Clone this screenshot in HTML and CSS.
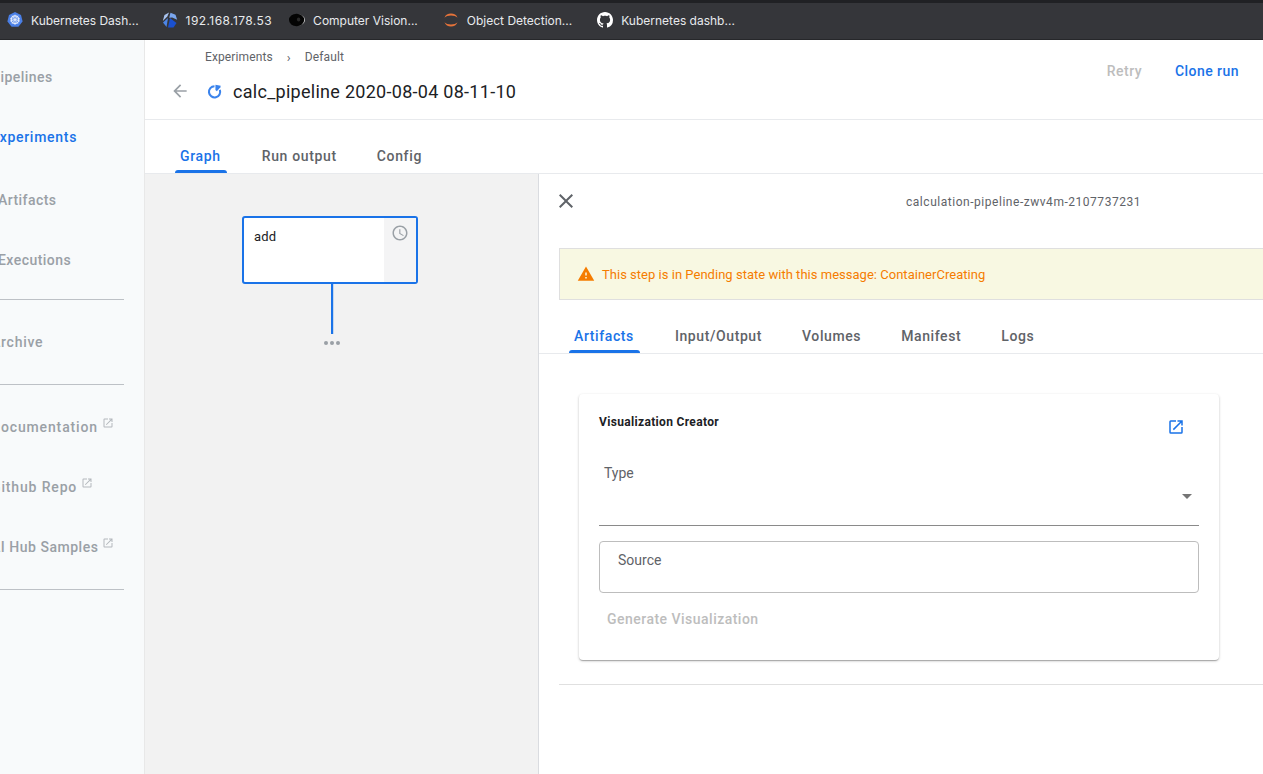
FILE: index.html
```html
<!DOCTYPE html>
<html lang="en">
<head>
<meta charset="utf-8">
<title>Kubeflow run</title>
<link rel="stylesheet" href="styles.css">
</head>
<body>
<div class="browser-top"></div>
<div class="bookmarks">
  <div class="bm bm-1">
    <svg class="fav" viewBox="0 0 16 16"><path d="M8 0l6 2.900 1.600 6.500-4.200 5.300H4.600L.4 9.400 2 2.900z" fill="#4a7fe6"/><circle cx="8" cy="7.700" r="3.800" fill="none" stroke="#e3ebfb" stroke-width="1.300"/><path d="M8 2.600v10.200M3.200 6.300l9.600 2.800M12.800 6.300L3.200 9.100M5 11.800l6-8.200M11 11.800L5 3.600" stroke="#e3ebfb" stroke-width=".8"/></svg>
    <span>Kubernetes Dash...</span>
  </div>
  <div class="bm bm-2">
    <svg class="fav" viewBox="0 0 16 16"><path d="M7 .5L2.500 3 .8 9l4.500-4.500z" fill="#a9c4f0"/><path d="M8.500 .8l5 2 1.700 5-5-2.300-3 .2z" fill="#7aa6ee"/><path d="M8 6l6.500 5-3 4.500H6z" fill="#1a50cf"/><path d="M1 10.500L6 6l-1.500 9z" fill="#4d86e6"/></svg>
    <span class="ip">192.168.178.53</span>
  </div>
  <div class="bm bm-3">
    <svg class="fav" viewBox="0 0 16 16"><ellipse cx="8.600" cy="8" rx="7.400" ry="5.800" fill="#d8d8d8"/><ellipse cx="7.600" cy="8" rx="7.600" ry="6.200" fill="#040404"/><ellipse cx="9.600" cy="7.600" rx="1.700" ry="2" fill="#2a2a2a"/></svg>
    <span>Computer Vision...</span>
  </div>
  <div class="bm bm-4">
    <svg class="fav" viewBox="0 0 16 16"><path d="M1.500 5.800C3 .2 13 .2 14.500 5.800 11.800 2.900 4.200 2.900 1.500 5.800zM1.500 10.200c1.500 5.600 11.500 5.600 13 0-2.700 2.900-10.300 2.900-13 0z" fill="#e5733a"/></svg>
    <span>Object Detection...</span>
  </div>
  <div class="bm bm-5">
    <svg class="fav" viewBox="0 0 16 16"><path fill="#fff" d="M8 0C3.580 0 0 3.580 0 8c0 3.540 2.290 6.530 5.470 7.590.4.070.55-.17.55-.38 0-.19-.01-.82-.01-1.490-2.010.37-2.530-.49-2.690-.94-.09-.23-.48-.94-.82-1.130-.28-.15-.68-.52-.01-.53.63-.01 1.080.58 1.230.82.720 1.210 1.870.870 2.330.660.070-.520.280-.870.510-1.070-1.780-.2-3.640-.890-3.640-3.950 0-.870.310-1.590.820-2.150-.08-.2-.36-1.020.08-2.120 0 0 .67-.21 2.200.82.640-.18 1.320-.27 2-.27s1.360.09 2 .27c1.530-1.040 2.200-.82 2.200-.82.440 1.100.160 1.920.080 2.120.510.560.820 1.270.820 2.150 0 3.070-1.870 3.750-3.650 3.950.290.250.540.730.540 1.480 0 1.070-.010 1.930-.010 2.200 0 .210.150.460.550.380A8.010 8.010 0 0016 8c0-4.420-3.580-8-8-8z"/></svg>
    <span>Kubernetes dashb...</span>
  </div>
</div>
<div class="app">
  <nav class="sidenav">
    <div class="nav-group nav-group-first">
      <a class="nav-item">Pipelines</a>
      <a class="nav-item nav-active">Experiments</a>
      <a class="nav-item nav-spaced nav-near">Artifacts</a>
      <a class="nav-item nav-near">Executions</a>
    </div>
    <div class="nav-sep"></div>
    <div class="nav-group nav-group-mid">
      <a class="nav-item nav-archive">Archive</a>
    </div>
    <div class="nav-sep"></div>
    <div class="nav-group nav-group-mid">
      <a class="nav-item nav-ext">Documentation<svg class="ext" viewBox="0 0 24 24"><path d="M19 19H5V5h7V3H5a2 2 0 00-2 2v14a2 2 0 002 2h14a2 2 0 002-2v-7h-2v7zM14 3v2h3.590l-9.830 9.830 1.410 1.410L19 6.410V10h2V3h-7z"/></svg></a>
      <a class="nav-item nav-ext">Github Repo<svg class="ext" viewBox="0 0 24 24"><path d="M19 19H5V5h7V3H5a2 2 0 00-2 2v14a2 2 0 002 2h14a2 2 0 002-2v-7h-2v7zM14 3v2h3.590l-9.830 9.830 1.410 1.410L19 6.410V10h2V3h-7z"/></svg></a>
      <a class="nav-item nav-hub">AI Hub Samples<svg class="ext" viewBox="0 0 24 24"><path d="M19 19H5V5h7V3H5a2 2 0 00-2 2v14a2 2 0 002 2h14a2 2 0 002-2v-7h-2v7zM14 3v2h3.590l-9.830 9.830 1.410 1.410L19 6.410V10h2V3h-7z"/></svg></a>
    </div>
    <div class="nav-sep"></div>
  </nav>
  <main class="main">
    <header class="page-head">
      <div class="head-left">
        <div class="crumbs"><span>Experiments</span><span class="crumb-sep">›</span><span>Default</span></div>
        <div class="title-row">
          <svg class="back" viewBox="0 0 24 24"><path d="M20 11H7.830l5.590-5.590L12 4l-8 8 8 8 1.410-1.410L7.830 13H20v-2z"/></svg>
          <svg class="status" viewBox="0 0 16 16"><path d="M8 2.300A6 6 0 1 0 13.700 6.200" fill="none" stroke="#3a83ec" stroke-width="2.200"/><path d="M9 .8l5.600 1-.3 1.600-3.800 4.400-1.500-1.300z" fill="#3a83ec"/></svg>
          <h1 class="title">calc_pipeline 2020-08-04 08-11-10</h1>
        </div>
      </div>
      <div class="head-actions">
        <span class="btn-disabled">Retry</span>
        <span class="btn-primary">Clone run</span>
      </div>
    </header>
    <div class="tabs run-tabs">
      <span class="tab tab-active">Graph</span>
      <span class="tab">Run output</span>
      <span class="tab">Config</span>
    </div>
    <div class="content">
      <section class="graph">
        <div class="node">
          <span class="node-name">add</span>
          <div class="node-status">
            <svg class="clock" viewBox="0 0 24 24"><path d="M11.990 2C6.470 2 2 6.480 2 12s4.470 10 9.990 10C17.520 22 22 17.520 22 12S17.520 2 11.990 2zM12 20c-4.420 0-8-3.580-8-8s3.580-8 8-8 8 3.580 8 8-3.580 8-8 8zm.5-13H11v6l5.250 3.150.75-1.230-4.500-2.670z"/></svg>
          </div>
        </div>
        <div class="edge"></div>
        <div class="dots"><i></i><i></i><i></i></div>
      </section>
      <section class="panel">
        <div class="panel-head">
          <svg class="close" viewBox="0 0 24 24"><path d="M19 6.410L17.590 5 12 10.590 6.410 5 5 6.410 10.590 12 5 17.590 6.410 19 12 13.410 17.590 19 19 17.590 13.410 12z"/></svg>
          <span class="panel-title">calculation-pipeline-zwv4m-2107737231</span>
        </div>
        <div class="banner">
          <svg class="warn" viewBox="0 0 24 24"><path d="M1 21h22L12 2 1 21zm12-3h-2v-2h2v2zm0-4h-2v-4h2v4z"/></svg>
          <span>This step is in Pending state with this message: ContainerCreating</span>
        </div>
        <div class="tabs panel-tabs">
          <span class="tab tab-active">Artifacts</span>
          <span class="tab">Input/Output</span>
          <span class="tab">Volumes</span>
          <span class="tab">Manifest</span>
          <span class="tab">Logs</span>
        </div>
        <div class="card">
          <div class="card-head">
            <span class="card-title">Visualization Creator</span>
            <svg class="open" viewBox="0 0 24 24"><path d="M19 19H5V5h7V3H5a2 2 0 00-2 2v14a2 2 0 002 2h14a2 2 0 002-2v-7h-2v7zM14 3v2h3.590l-9.830 9.830 1.410 1.410L19 6.410V10h2V3h-7z"/></svg>
          </div>
          <div class="select">
            <span class="select-label">Type</span>
            <span class="caret"></span>
          </div>
          <div class="source"><span>Source</span></div>
          <div class="generate">Generate Visualization</div>
        </div>
        <div class="panel-rule"></div>
      </section>
    </div>
  </main>
</div>
</body>
</html>
```
FILE: styles.css
```css
* { box-sizing: border-box; }
html, body { margin: 0; height: 100%; overflow: hidden; }
body {
  width: 1263px;
  height: 774px;
  display: flex;
  flex-direction: column;
  background: #fff;
  font-family: Roboto, "Liberation Sans", sans-serif;
  color: #202124;
}
.browser-top { height: 3px; background: #202124; flex: none; }
.bookmarks {
  height: 37px;
  flex: none;
  display: flex;
  align-items: center;
  background: #35363a;
  border-bottom: 1px solid #26272a;
  color: #e8eaed;
  font: 12px "Inter", Roboto, sans-serif;
  padding-left: 7px;
  padding-bottom: 2px;
}
.bm { display: flex; align-items: center; gap: 8px; white-space: nowrap; }
.bm-2 { margin-left: 23px; }
.bm-3 { margin-left: 17px; }
.bm-4 { margin-left: 25px; }
.bm-5 { margin-left: 25px; }
.ip { letter-spacing: .42px; }
.fav { width: 16px; height: 16px; flex: none; }
.app { flex: 1; display: flex; min-height: 0; }
.sidenav {
  width: 145px;
  flex: none;
  background: #f8fafb;
  border-right: 1px solid #e8e8e8;
  overflow: hidden;
}
.nav-group-first { padding-top: 7px; }
.nav-group-first .nav-item:last-child { margin-bottom: 9px; }
.nav-group-mid { padding-top: 12px; padding-bottom: 12px; }
.nav-item {
  display: flex;
  height: 60px;
  align-items: center;
  margin-left: -9px;
  font-size: 14px;
  font-weight: 500;
  letter-spacing: .45px;
  color: #9aa0a6;
  white-space: nowrap;
}
.nav-spaced { margin-top: 3px; }
.nav-active { color: #1a73e8; letter-spacing: .72px; }
.nav-near { margin-left: -2px; }
.nav-archive { letter-spacing: .75px; }
.nav-ext { letter-spacing: .85px; }
.nav-hub { letter-spacing: .52px; }
.nav-sep { width: 124px; border-top: 1px solid #bdc1c6; }
.ext { width: 12px; height: 12px; margin: -8px 0 0 4px; fill: #b4b8bd; }
.main { flex: 1; min-width: 0; display: flex; flex-direction: column; }
.page-head {
  height: 80px;
  flex: none;
  display: flex;
  justify-content: space-between;
  border-bottom: 1px solid #e8eaed;
}
.head-left { padding-left: 25px; }
.crumbs {
  display: flex;
  align-items: center;
  height: 34px;
  padding: 0 0 0 35px;
  font-size: 12px;
  letter-spacing: .12px;
  color: #5f6368;
}
.crumb-sep { margin: 0 14px; font-size: 13px; }
.title-row { display: flex; align-items: center; height: 34px; }
.back { width: 20px; height: 20px; fill: #9aa0a6; }
.status { width: 15px; height: 15px; margin-left: 17px; }
.title {
  margin: 0 0 0 11px;
  font-size: 18px;
  font-weight: 400;
  letter-spacing: .28px;
  color: #202124;
  white-space: nowrap;
}
.head-actions {
  display: flex;
  align-items: center;
  gap: 33px;
  height: 61px;
  padding-right: 24px;
  padding-top: 1px;
  font-size: 14px;
  font-weight: 500;
  letter-spacing: .45px;
}
.btn-disabled { color: #bdbdbd; }
.btn-primary { color: #1a73e8; }
.tabs { display: flex; flex: none; }
.tab {
  position: relative;
  display: flex;
  align-items: center;
  padding: 0 5px;
  margin-right: 30px;
  font-size: 14px;
  font-weight: 500;
  letter-spacing: .6px;
  color: #5f6368;
  white-space: nowrap;
}
.tab-active { color: #1a73e8; padding-right: 6px; }
.tab-active::after {
  content: "";
  position: absolute;
  left: 0;
  right: 0;
  bottom: 0;
  height: 3px;
  background: #1a73e8;
  border-radius: 3px 3px 0 0;
}
.run-tabs { height: 53px; padding-left: 30px; padding-top: 19px; }
.run-tabs .tab { letter-spacing: .65px; }
.content { flex: 1; min-height: 0; display: flex; border-top: 1px solid #e8eaed; }
.graph {
  position: relative;
  width: 393px;
  flex: none;
  background: #f2f2f2;
}
.node {
  position: absolute;
  left: 97px;
  top: 42px;
  width: 176px;
  height: 68px;
  display: flex;
  justify-content: space-between;
  background: #fff;
  border: 2px solid #1a73e8;
  border-radius: 3px;
}
.node-name { padding: 11px 0 0 10px; font-size: 13px; letter-spacing: .2px; color: #202124; }
.node-status { width: 32px; background: #f4f4f5; display: flex; justify-content: center; padding-top: 6px; }
.clock { width: 18px; height: 18px; fill: #9aa0a6; }
.edge {
  position: absolute;
  left: 186px;
  top: 110px;
  width: 2px;
  height: 50px;
  background: #1a73e8;
  box-shadow: 1px 0 0 rgba(26,115,232,.2);
}
.dots { position: absolute; left: 179px; top: 167px; display: flex; gap: 2px; }
.dots i { width: 4px; height: 4px; border-radius: 50%; background: #9aa0a6; }
.panel {
  flex: 1;
  min-width: 0;
  background: #fff;
  border-left: 1px solid #dadce0;
}
.panel-head {
  height: 74px;
  display: flex;
  align-items: flex-start;
  padding: 15px 0 0 15px;
}
.close { width: 24px; height: 24px; fill: #5f6368; }
.panel-title {
  margin: 6px 0 0 328px;
  font-size: 12px;
  letter-spacing: .53px;
  color: #5f6368;
  white-space: nowrap;
}
.banner {
  height: 52px;
  margin: 0 -4px 0 20px;
  display: flex;
  align-items: center;
  gap: 7px;
  padding-left: 17px;
  background: #f8f8e2;
  border: 1px solid #dfdfdf;
  font-size: 13px;
  letter-spacing: .02px;
  color: #f57c00;
  white-space: nowrap;
}
.warn { width: 18px; height: 18px; fill: #f57c00; }
.panel-tabs {
  height: 54px;
  padding-left: 30px;
  border-bottom: 1px solid #e8eaed;
}
.panel-tabs .tab { padding-top: 18px; }
.card {
  margin: 40px 44px 0 40px;
  height: 266px;
  padding: 0 20px;
  background: #fff;
  border-radius: 4px;
  box-shadow: 0 1px 3px 0 rgba(0,0,0,.2), 0 1px 1px 0 rgba(0,0,0,.14), 0 2px 1px -1px rgba(0,0,0,.12);
}
.card-head { height: 48px; display: flex; justify-content: space-between; align-items: flex-start; padding-top: 21px; }
.card-title { font-size: 12px; font-weight: 700; letter-spacing: .33px; color: #202124; }
.open { width: 18px; height: 18px; fill: #1a73e8; margin: 3px 14px 0 0; }
.select {
  position: relative;
  height: 84px;
  padding: 23px 0 0 5px;
  border-bottom: 1px solid #8a8a8a;
  font-size: 14px;
  color: #5f6368;
}
.caret {
  position: absolute;
  right: 7px;
  top: 52px;
  border: 5px solid transparent;
  border-top-color: #757575;
  border-bottom: 0;
}
.source {
  height: 52px;
  margin-top: 15px;
  padding: 10px 0 0 18px;
  border: 1px solid #bdbdbd;
  border-radius: 4px;
  font-size: 14px;
  color: #5f6368;
}
.generate {
  margin-top: 18px;
  padding-left: 8px;
  font-size: 14px;
  font-weight: 500;
  letter-spacing: .48px;
  color: #bdbdbd;
}
.panel-rule { margin: 24px -4px 0 20px; border-top: 1px solid #e0e0e0; }
```
